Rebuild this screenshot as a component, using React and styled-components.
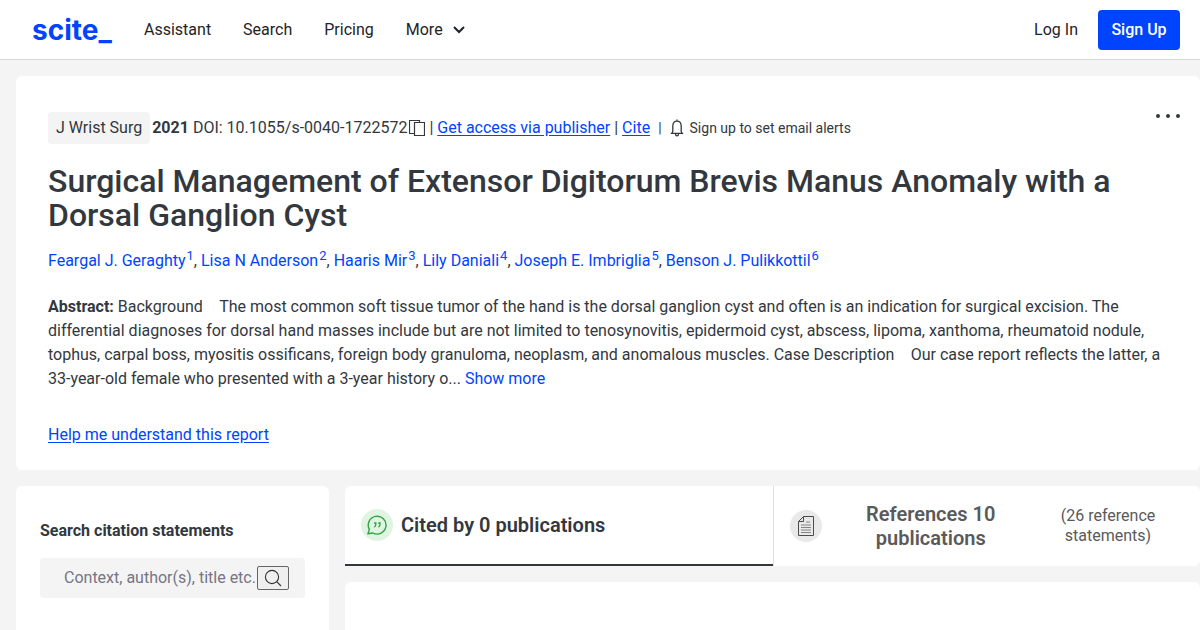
import React from "react";
import styled, { createGlobalStyle } from "styled-components";

const GlobalStyle = createGlobalStyle`
  *, *::before, *::after { box-sizing: border-box; }
  html { height: 100%; overflow: hidden; }
  body {
    margin: 0;
    background: #f4f4f4;
    color: #32383e;
    font-family: Roboto, "Liberation Sans", sans-serif;
    font-size: 16px;
    line-height: 24px;
  }
  button, input { font: inherit; color: inherit; }
`;

const Header = styled.header`
  display: flex;
  align-items: center;
  height: 60px;
  padding: 1px 20px 0 32px;
  background: #fff;
  border-bottom: 1px solid #d8d8d8;
`;

const Logo = styled.a`
  width: 80px;
  margin-right: 32px;
  color: #0044ff;
  font: 700 28px/32px Inter, sans-serif;
  text-decoration: none;
`;

const Nav = styled.nav`
  display: flex;
  flex: 1;
  gap: 32px;
`;

const NavLink = styled.a`
  color: #1f2326;
  text-decoration: none;
`;

const MenuButton = styled.button`
  display: flex;
  align-items: center;
  gap: 10px;
  padding: 0;
  border: 0;
  background: none;
  color: #1f2326;
`;

const SignUp = styled.button`
  min-width: 82px;
  height: 40px;
  margin-left: 20px;
  padding: 0 12px;
  border: 0;
  border-radius: 4px;
  background: #0044ff;
  color: #fff;
  font-weight: 500;
`;

const Page = styled.main`
  display: grid;
  gap: 16px;
  padding: 16px 0 0 16px;
`;

const Card = styled.section`
  background: #fff;
  border-radius: 6px;
`;

const Report = styled(Card)`
  padding: 32px 32px 23px;
`;

const MetaRow = styled.div`
  display: flex;
  align-items: center;
  justify-content: space-between;
  margin: 4px 0 20px;
`;

const Meta = styled.div`
  display: flex;
  align-items: center;
  gap: 2px;
  white-space: nowrap;
`;

const Journal = styled.span`
  padding: 4px 8px;
  border-radius: 4px;
  background: #f4f4f4;
`;

const Year = styled.strong`
  margin-right: 2px;
`;

const Separator = styled.span`
  padding: 0 2px;
`;

const IconButton = styled.button`
  display: flex;
  padding: 0;
  border: 0;
  background: none;
`;

const MoreButton = styled(IconButton)`
  align-self: flex-start;
  margin-right: -12px;
`;

const AlertButton = styled.button`
  display: flex;
  align-items: center;
  gap: 6px;
  margin-left: 4px;
  padding: 0;
  border: 0;
  background: none;
  font-size: 14px;
`;

const Link = styled.a`
  color: #0044ff;
  text-decoration: ${(p) => (p.$plain ? "none" : "underline")};
  text-underline-offset: 2px;
`;

const Title = styled.h1`
  margin: 0 0 17px;
  font-size: 32px;
  font-weight: 500;
  line-height: 34px;
`;

const Authors = styled.p`
  margin: 0 0 22px;
`;

const Author = styled(Link)`
  sup {
    margin-left: 1px;
    font-size: 13px;
    line-height: 0;
  }
`;

const Abstract = styled.p`
  margin: 0 0 32px;
`;

const TextButton = styled.button`
  padding: 0;
  border: 0;
  background: none;
  color: #0044ff;
`;

const Columns = styled.div`
  display: grid;
  grid-template-columns: 313px 1fr;
  gap: 16px;
`;

const SearchCard = styled(Card)`
  padding: 33px 24px;
`;

const SearchLabel = styled.label`
  display: block;
  margin-bottom: 15px;
  font-weight: 700;
`;

const SearchBox = styled.form`
  display: flex;
  align-items: center;
  height: 40px;
  padding: 0 16px 0 24px;
  border-radius: 4px;
  background: #f4f4f4;
`;

const SearchInput = styled.input`
  flex: 1;
  min-width: 0;
  padding: 0;
  border: 0;
  background: none;
  &::placeholder { color: #757585; opacity: 1; }
`;

const SearchButton = styled.button`
  display: flex;
  align-items: center;
  justify-content: center;
  width: 32px;
  height: 24px;
  padding: 0;
  border: 1px solid #666;
  border-radius: 2px;
  background: #efefef;
`;

const Results = styled.div`
  display: grid;
  align-content: start;
  gap: 16px;
`;

const Tabs = styled(Card)`
  display: grid;
  grid-template-columns: 1fr 1fr;
  height: 80px;
  border-bottom-left-radius: 0;
  overflow: hidden;
`;

const Tab = styled.button`
  display: flex;
  align-items: center;
  padding: 0 16px;
  border: 0;
  border-bottom: ${(p) => (p.$active ? "2px solid #32383e" : "0")};
  border-left: ${(p) => (p.$active ? "0" : "1px solid #dedede")};
  background: #fff;
  color: ${(p) => (p.$active ? "#32383e" : "#5a5a5a")};
`;

const Badge = styled.span`
  display: flex;
  flex: none;
  align-items: center;
  justify-content: center;
  width: 32px;
  height: 32px;
  margin-right: 8px;
  border-radius: 50%;
  background: ${(p) => p.$tone};
`;

const TabTitle = styled.span`
  flex: ${(p) => (p.$wide ? "1" : "none")};
  font-size: 20px;
  font-weight: 600;
`;

const TabNote = styled.span`
  width: 152px;
  padding: 0 12px;
  line-height: 20px;
`;

const Statement = styled(Card)`
  min-height: 240px;
`;

const authors = [
  "Feargal J. Geraghty",
  "Lisa N Anderson",
  "Haaris Mir",
  "Lily Daniali",
  "Joseph E. Imbriglia",
  "Benson J. Pulikkottil",
];

const ChevronIcon = () => (
  <svg width="12" height="8" viewBox="0 0 12 8" fill="none" stroke="currentColor" strokeWidth="2" aria-hidden="true">
    <path d="M1 1l5 5 5-5" />
  </svg>
);

const CopyIcon = () => (
  <svg width="16" height="17" viewBox="0 0 16 17" fill="none" stroke="#32383e" strokeWidth="1.2" aria-hidden="true">
    <path d="M5.5 13.5h-5v-13h10v2" />
    <path d="M5.5 2.5h10v13h-10z" />
  </svg>
);

const BellIcon = () => (
  <svg width="14" height="18" viewBox="0 0 14 18" fill="none" stroke="#32383e" strokeWidth="1.3" aria-hidden="true">
    <path d="M.8 14.3h12.4M2 14.2l.8-1.8V7.2C2.8 4.2 4.4 2.2 7 2.2s4.2 2 4.2 5v5.2l.8 1.8M7 .5v1.7M5.6 14.5v.9a1.4 1.4 0 0 0 2.8 0v-.9" />
  </svg>
);

const DotsIcon = () => (
  <svg width="24" height="8" viewBox="0 0 24 8" fill="#32383e" aria-hidden="true">
    <circle cx="2" cy="4" r="2" />
    <circle cx="12" cy="4" r="2" />
    <circle cx="22" cy="4" r="2" />
  </svg>
);

const SearchIcon = () => (
  <svg width="18" height="18" viewBox="0 0 18 18" fill="none" stroke="#333" strokeWidth="1.1" aria-hidden="true">
    <circle cx="8" cy="8" r="6.6" />
    <path d="M12.7 12.7l4.3 4.3" />
  </svg>
);

const QuoteIcon = () => (
  <svg width="20" height="20" viewBox="0 0 20 20" fill="none" stroke="#35a147" strokeWidth="1.4" aria-hidden="true">
    <path d="M.9 18.8l1.5-4.3A8.9 8.9 0 1 1 6 18z" strokeLinejoin="round" />
    <path d="M7 8h1.8v1.2c0 1.5-.5 2.3-1.5 2.9M11.2 8H13v1.2c0 1.5-.5 2.3-1.5 2.9" />
  </svg>
);

const DocumentIcon = () => (
  <svg width="16" height="20" viewBox="0 0 16 20" fill="none" stroke="#4c4c4c" aria-hidden="true">
    <path d="M5.5.5h10v19H.5v-14zv5h-5" />
    <path d="M8 6h4M3 9h10M3 11.5h10M3 14h10M3 16.5h10" stroke="#858585" />
  </svg>
);

export default function App() {
  return (
    <>
      <GlobalStyle />
      <Header>
        <Logo href="#">scite_</Logo>
        <Nav>
          <NavLink href="#">Assistant</NavLink>
          <NavLink href="#">Search</NavLink>
          <NavLink href="#">Pricing</NavLink>
          <MenuButton type="button">More <ChevronIcon /></MenuButton>
        </Nav>
        <NavLink href="#">Log In</NavLink>
        <SignUp type="button">Sign Up</SignUp>
      </Header>
      <Page>
        <Report>
          <MetaRow>
            <Meta>
              <Journal>J Wrist Surg</Journal>
              <Year>2021</Year>
              <span>DOI: 10.1055/s-0040-1722572</span>
              <IconButton type="button" aria-label="Copy DOI"><CopyIcon /></IconButton>
              <Separator>|</Separator>
              <Link href="#">Get access via publisher</Link>
              <Separator>|</Separator>
              <Link href="#">Cite</Link>
              <AlertButton type="button"><Separator>|</Separator><BellIcon />Sign up to set email alerts</AlertButton>
            </Meta>
            <MoreButton type="button" aria-label="More options"><DotsIcon /></MoreButton>
          </MetaRow>
          <Title>Surgical Management of Extensor Digitorum Brevis Manus Anomaly with a Dorsal Ganglion Cyst</Title>
          <Authors>
            {authors.map((name, i) => (
              <React.Fragment key={name}>
                {i > 0 && ", "}
                <Author href="#" $plain>{name}<sup>{i + 1}</sup></Author>
              </React.Fragment>
            ))}
          </Authors>
          <Abstract>
            <strong>Abstract:</strong>{" Background\u2003The most common soft tissue tumor of the hand is the dorsal ganglion cyst and often is an indication for surgical excision. The differential diagnoses for dorsal hand masses include but are not limited to tenosynovitis, epidermoid cyst, abscess, lipoma, xanthoma, rheumatoid nodule, tophus, carpal boss, myositis ossificans, foreign body granuloma, neoplasm, and anomalous muscles. Case Description\u2003Our case report reflects the latter, a 33-year-old female who presented with a 3-year history o... "}
            <TextButton type="button">Show more</TextButton>
          </Abstract>
          <Link href="#">Help me understand this report</Link>
        </Report>
        <Columns>
          <SearchCard as="aside">
            <SearchLabel htmlFor="citation-search">Search citation statements</SearchLabel>
            <SearchBox>
              <SearchInput id="citation-search" type="text" placeholder="Context, author(s), title etc." />
              <SearchButton type="submit" aria-label="Search"><SearchIcon /></SearchButton>
            </SearchBox>
          </SearchCard>
          <Results>
            <Tabs as="div">
              <Tab type="button" $active>
                <Badge $tone="#dff5e1"><QuoteIcon /></Badge>
                <TabTitle>Cited by 0 publications</TabTitle>
              </Tab>
              <Tab type="button">
                <Badge $tone="#e9e9e9"><DocumentIcon /></Badge>
                <TabTitle $wide>References 10<br />publications</TabTitle>
                <TabNote>(26 reference statements)</TabNote>
              </Tab>
            </Tabs>
            <Statement />
          </Results>
        </Columns>
      </Page>
    </>
  );
}
